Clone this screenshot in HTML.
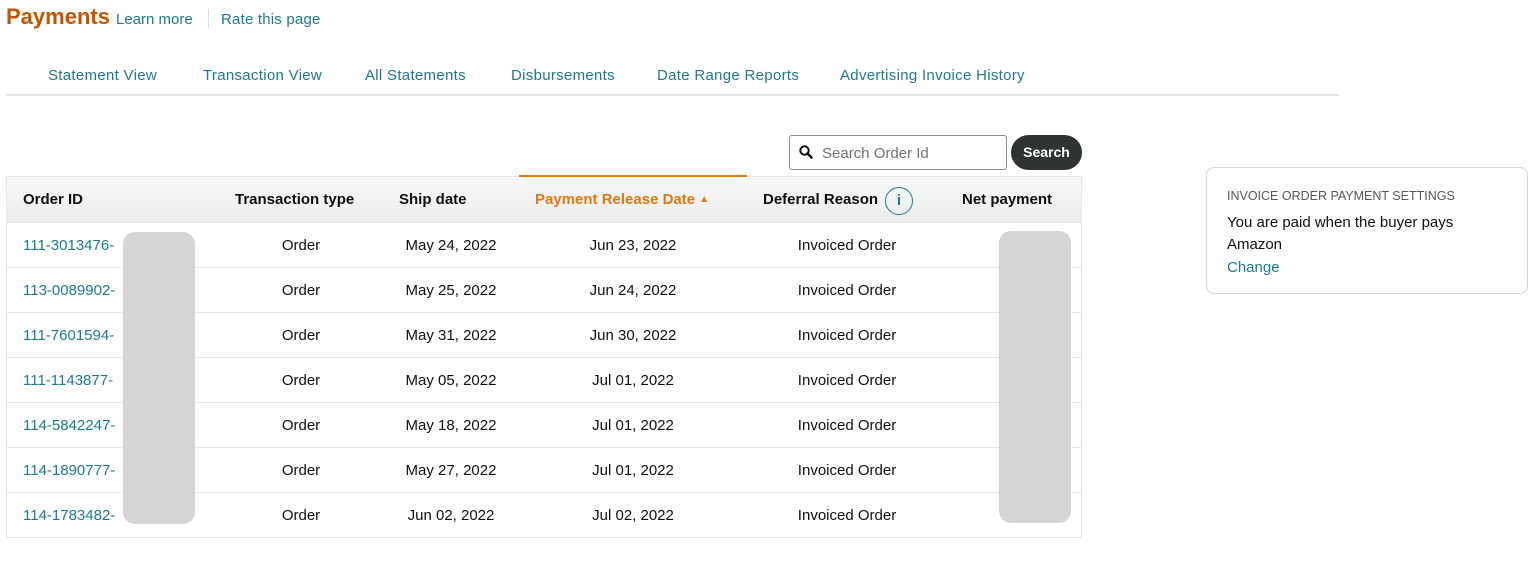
<!DOCTYPE html>
<html><head><meta charset="utf-8"><style>
*{margin:0;padding:0;box-sizing:border-box}
body{width:1536px;height:538px;overflow:hidden;background:#fff;font-family:"Liberation Sans",sans-serif;color:#0f1111;position:relative}
.a{position:absolute;white-space:nowrap}
.link{color:#1f7a8c}
.tab{top:67px;font-size:15px;color:#1f7a8c;letter-spacing:0.3px}
.c{transform:translateX(-50%);font-size:15px}
.hd{font-weight:bold;font-size:15px;top:191px}
.row{position:absolute;left:6px;width:1075px;height:45px;border-top:1px solid #e7e7e7}
</style></head><body>
<div class="a" style="left:6px;top:4px;font-size:22px;font-weight:bold;color:#c45500">Payments</div>
<div class="a link" style="left:116px;top:11px;font-size:15px">Learn more</div>
<div class="a" style="left:208px;top:9px;width:1px;height:19px;background:#ddd"></div>
<div class="a link" style="left:221px;top:11px;font-size:15px;letter-spacing:0.2px">Rate this page</div>
<div class="a tab" style="left:48px">Statement View</div>
<div class="a tab" style="left:203px">Transaction View</div>
<div class="a tab" style="left:365px">All Statements</div>
<div class="a tab" style="left:511px">Disbursements</div>
<div class="a tab" style="left:657px">Date Range Reports</div>
<div class="a tab" style="left:840px">Advertising Invoice History</div>
<div class="a" style="left:6px;top:94px;width:1333px;height:2px;background:#e7e7e7"></div>

<div class="a" style="left:789px;top:135px;width:218px;height:35px;border:1px solid #888c8c;border-radius:3px"></div>
<svg class="a" style="left:799px;top:145px" width="14" height="14" viewBox="0 0 14 14"><circle cx="5.5" cy="5.5" r="4.2" fill="none" stroke="#0f1111" stroke-width="2"/><path d="M8.5 8.5L12.5 12.5" stroke="#0f1111" stroke-width="2.4" stroke-linecap="round"/></svg>
<div class="a" style="left:822px;top:145px;font-size:15px;color:#6f7373">Search Order Id</div>
<div class="a" style="left:1011px;top:135px;width:71px;height:35px;border-radius:18px;background:#303333;color:#fff;font-weight:bold;font-size:14px;text-align:center;line-height:35px">Search</div>

<div class="a" style="left:6px;top:176px;width:1076px;height:362px;border:1px solid #e7e7e7;border-bottom:none"></div>
<div class="a" style="left:7px;top:177px;width:1074px;height:45px;background:linear-gradient(#f7f8f8,#eceeee)"></div>
<div class="a" style="left:519px;top:175px;width:228px;height:2px;background:#e47911"></div>
<div class="a hd" style="left:23px">Order ID</div>
<div class="a hd" style="left:235px">Transaction type</div>
<div class="a hd" style="left:399px">Ship date</div>
<div class="a hd" style="left:535px;color:#e47911">Payment Release Date <span style="font-size:10px;position:relative;top:-2px">&#9650;</span></div>
<div class="a hd" style="left:763px">Deferral Reason</div>
<div class="a" style="left:885px;top:187px;width:28px;height:28px;border:1.5px solid #1f7a8c;border-radius:50%;color:#1f7a8c;text-align:center;font-size:15px;line-height:25px;font-weight:bold">i</div>
<div class="a hd" style="left:962px">Net payment</div>

<div class="row" style="top:222px"></div><div class="row" style="top:267px"></div><div class="row" style="top:312px"></div><div class="row" style="top:357px"></div><div class="row" style="top:402px"></div><div class="row" style="top:447px"></div><div class="row" style="top:492px"></div><div class="row" style="top:537px"></div>

<div id="rows"></div>
<script>
var d=[["111-3013476-","May 24, 2022","Jun 23, 2022"],["113-0089902-","May 25, 2022","Jun 24, 2022"],["111-7601594-","May 31, 2022","Jun 30, 2022"],["111-1143877-","May 05, 2022","Jul 01, 2022"],["114-5842247-","May 18, 2022","Jul 01, 2022"],["114-1890777-","May 27, 2022","Jul 01, 2022"],["114-1783482-","Jun 02, 2022","Jul 02, 2022"]];
var h="";d.forEach(function(r,i){var t=237+i*45;
h+='<div class="a link" style="left:23px;top:'+t+'px;font-size:15px">'+r[0]+'</div>'+
'<div class="a c" style="left:301px;top:'+t+'px">Order</div>'+
'<div class="a c" style="left:451px;top:'+t+'px">'+r[1]+'</div>'+
'<div class="a c" style="left:633px;top:'+t+'px">'+r[2]+'</div>'+
'<div class="a c" style="left:847px;top:'+t+'px">Invoiced Order</div>';});
document.getElementById("rows").innerHTML=h;
</script>
<div class="a" style="left:123px;top:232px;width:72px;height:292px;background:#d5d5d5;border-radius:12px"></div>
<div class="a" style="left:999px;top:231px;width:72px;height:292px;background:#d5d5d5;border-radius:12px"></div>

<div class="a" style="left:1206px;top:167px;width:322px;height:127px;border:1px solid #d5d9d9;border-radius:8px"></div>
<div class="a" style="left:1227px;top:189px;font-size:12.5px;color:#565959">INVOICE ORDER PAYMENT SETTINGS</div>
<div class="a" style="left:1227px;top:214px;font-size:15px">You are paid when the buyer pays</div>
<div class="a" style="left:1227px;top:236px;font-size:15px">Amazon</div>
<div class="a link" style="left:1227px;top:259px;font-size:15px">Change</div>
</body></html>
